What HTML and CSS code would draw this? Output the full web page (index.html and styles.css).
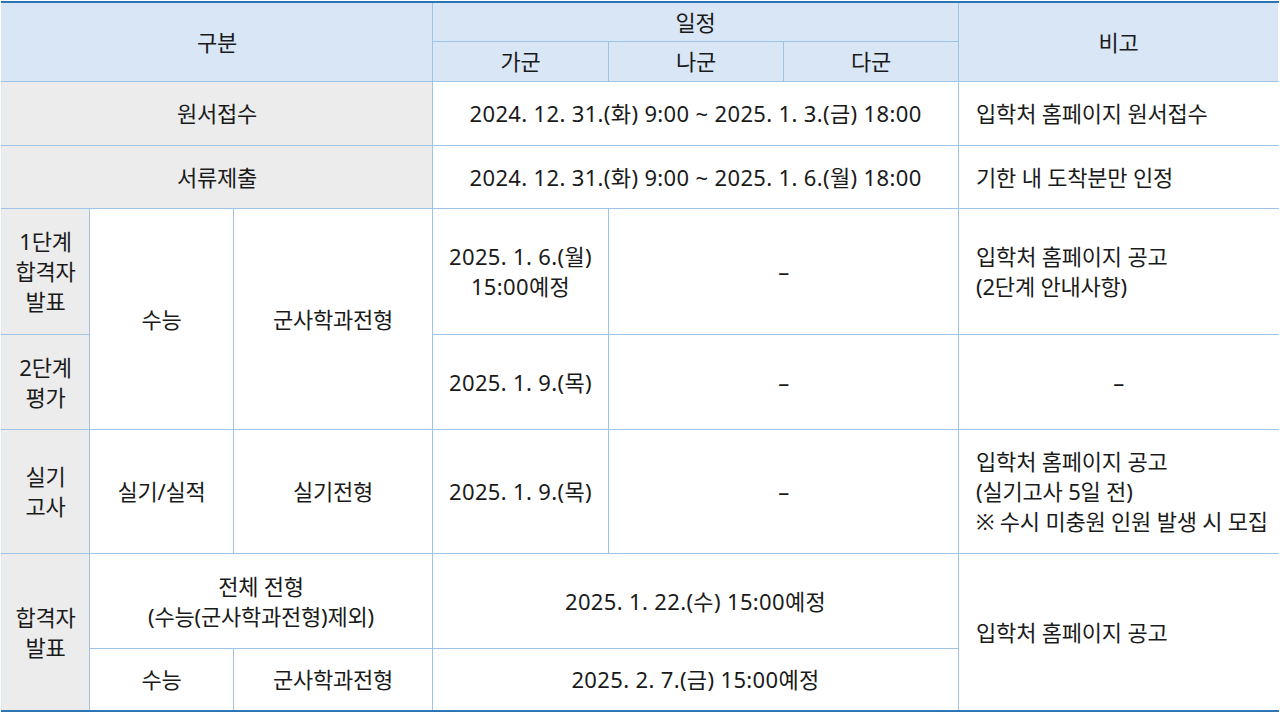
FILE: index.html
```html
<!DOCTYPE html>
<html lang="ko">
<head>
<meta charset="utf-8">
<link rel="stylesheet" href="styles.css">
</head>
<body>
<table class="sched">
  <colgroup>
    <col class="c1"><col class="c2"><col class="c3"><col class="c4"><col class="c5"><col class="c6"><col class="c7">
  </colgroup>
  <thead>
    <tr class="h1">
      <th colspan="3" rowspan="2">구분</th>
      <th colspan="3">일정</th>
      <th rowspan="2">비고</th>
    </tr>
    <tr class="h2">
      <th>가군</th><th>나군</th><th>다군</th>
    </tr>
  </thead>
  <tbody>
    <tr class="r64">
      <td colspan="3" class="gray">원서접수</td>
      <td colspan="3" class="dt">2024. 12. 31.(화) 9:00 ~ 2025. 1. 3.(금) 18:00</td>
      <td class="note">입학처 홈페이지 원서접수</td>
    </tr>
    <tr class="r63">
      <td colspan="3" class="gray">서류제출</td>
      <td colspan="3" class="dt">2024. 12. 31.(화) 9:00 ~ 2025. 1. 6.(월) 18:00</td>
      <td class="note">기한 내 도착분만 인정</td>
    </tr>
    <tr class="r126">
      <td class="gray">1단계<br>합격자<br>발표</td>
      <td rowspan="2">수능</td>
      <td rowspan="2">군사학과전형</td>
      <td class="dt">2025. 1. 6.(월)<br>15:00예정</td>
      <td colspan="2">–</td>
      <td class="note">입학처 홈페이지 공고<br>(2단계 안내사항)</td>
    </tr>
    <tr class="r95">
      <td class="gray">2단계<br>평가</td>
      <td class="dt">2025. 1. 9.(목)</td>
      <td colspan="2">–</td>
      <td>–</td>
    </tr>
    <tr class="r124">
      <td class="gray">실기<br>고사</td>
      <td>실기/실적</td>
      <td>실기전형</td>
      <td class="dt">2025. 1. 9.(목)</td>
      <td colspan="2">–</td>
      <td class="note">입학처 홈페이지 공고<br>(실기고사 5일 전)<br>※ 수시 미충원 인원 발생 시 모집</td>
    </tr>
    <tr class="r95">
      <td rowspan="2" class="gray">합격자<br>발표</td>
      <td colspan="2">전체 전형<br>(수능(군사학과전형)제외)</td>
      <td colspan="3" class="dt">2025. 1. 22.(수) 15:00예정</td>
      <td rowspan="2" class="note">입학처 홈페이지 공고</td>
    </tr>
    <tr class="r63 last">
      <td>수능</td>
      <td>군사학과전형</td>
      <td colspan="3" class="dt">2025. 2. 7.(금) 15:00예정</td>
    </tr>
  </tbody>
</table>
</body>
</html>
```

FILE: styles.css
```css
html, body {
  margin: 0;
  padding: 0;
  background: #ffffff;
}
body {
  padding: 1px 0 0 1px;
}
.sched {
  border-collapse: collapse;
  table-layout: fixed;
  width: 1278px;
  font-family: "Noto Sans", "Noto Sans CJK KR", sans-serif;
  font-size: 22px;
  line-height: 30px;
  color: #1a1a1a;
  letter-spacing: -0.2px;
}
.c1 { width: 88px; }
.c2 { width: 144px; }
.c3 { width: 199px; }
.c4 { width: 176px; }
.c5 { width: 175px; }
.c6 { width: 175px; }
.c7 { width: 320px; }
.sched th, .sched td {
  border: 1px solid #9dc3e6;
  padding: 0;
  text-align: center;
  vertical-align: middle;
  font-weight: 400;
}
.sched thead tr:first-child th {
  border-top: 2px solid #2e75b6;
}
.sched th {
  background: #d9e6f5;
}
.h1 { height: 39px; }
.h2 { height: 40px; }
.r64 { height: 64px; }
.r63 { height: 63px; }
.r126 { height: 126px; }
.r95 { height: 95px; }
.r124 { height: 124px; }
.gray {
  background: #ececec;
}
.sched td.dt {
  letter-spacing: 0.35px;
}
.sched td.note {
  text-align: left;
  padding-left: 17px;
}
.sched tr.last td, .sched td[rowspan="2"].note, .sched tr.r95 td[rowspan="2"].gray {
  border-bottom: 2px solid #2e75b6;
}
.sched tr th:first-child, .sched tr td:first-child {
  border-left-color: #dbe7f3;
}
.sched tr th:last-child, .sched tr td:last-child {
  border-right-color: #ffffff;
}
```
